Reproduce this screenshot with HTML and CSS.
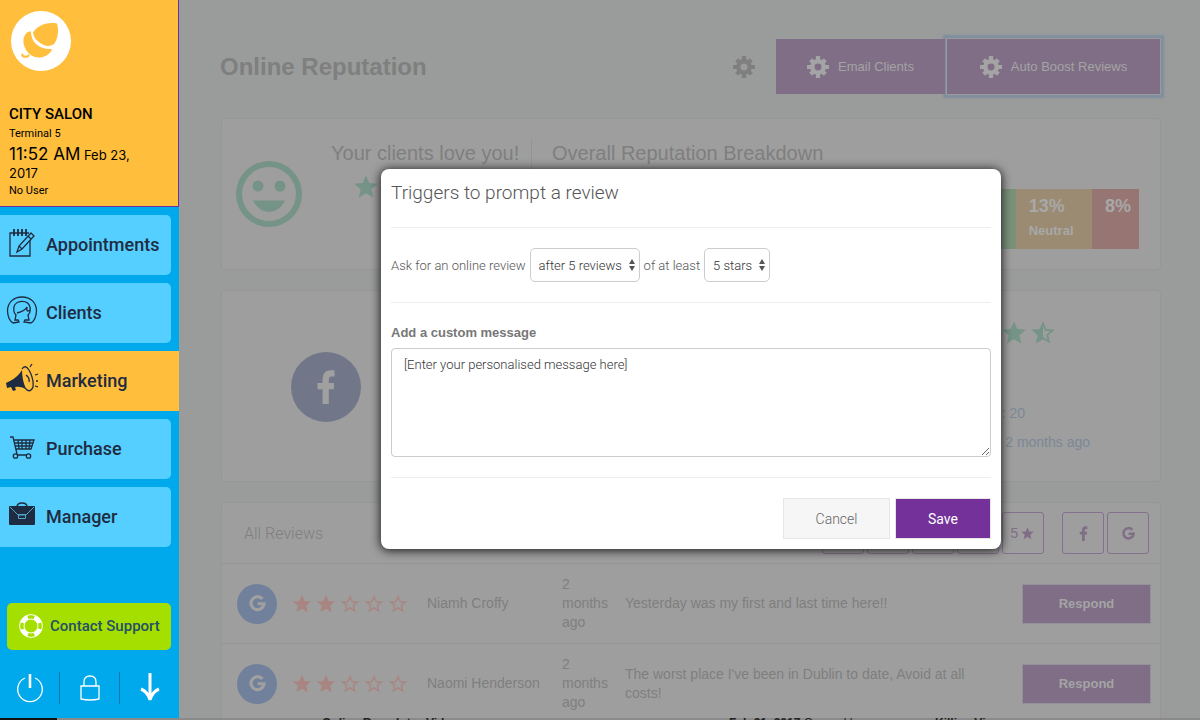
FILE: index.html
```html
<!DOCTYPE html>
<html lang="en">
<head>
    <meta charset="UTF-8">
    <meta name="viewport" content="width=device-width, initial-scale=1.0">
    <title>Online Reputation</title>
    <link rel="stylesheet" href="styles.css">
</head>
<body>

    <!-- Shared icons -->
    <svg class="sprite" aria-hidden="true">
        <symbol id="star" viewBox="0 0 24 24"><path fill="currentColor" d="M12 17.27 18.18 21l-1.64-7.03L22 9.24l-7.19-.61L12 2 9.19 8.63 2 9.24l5.46 4.73L5.82 21z"/></symbol>
        <symbol id="star-empty" viewBox="0 0 24 24"><path fill="currentColor" d="M22 9.24l-7.19-.62L12 2 9.19 8.63 2 9.24l5.46 4.73L5.82 21 12 17.27 18.18 21l-1.63-7.03L22 9.24zM12 15.4l-3.76 2.27 1-4.28-3.32-2.88 4.38-.38L12 6.1l1.71 4.04 4.38.38-3.32 2.88 1 4.28L12 15.4z"/></symbol>
        <symbol id="star-half" viewBox="0 0 24 24"><path fill="currentColor" d="M22 9.24l-7.19-.62L12 2 9.19 8.63 2 9.24l5.46 4.73L5.82 21 12 17.27 18.18 21l-1.63-7.03L22 9.24zM12 15.4V6.1l1.71 4.04 4.38.38-3.32 2.88 1 4.28L12 15.4z"/></symbol>
        <symbol id="gear" viewBox="0 0 24 24">
            <circle cx="12" cy="12" r="6.2" fill="none" stroke="currentColor" stroke-width="4.8"/>
            <path fill="none" stroke="currentColor" stroke-width="4.6" d="M12 0v6M12 18v6M0 12h6M18 12h6M4 4l3.6 3.6M16.4 16.4l3.6 3.6M4 20l3.6-3.6M16.4 7.6l3.6-3.6"/>
        </symbol>
        <symbol id="google" viewBox="0 0 24 24"><path fill="none" stroke="currentColor" stroke-width="4" d="M18.2 6.2A8.2 8.2 0 1 0 20.2 12.3H12.2"/></symbol>
        <symbol id="facebook" viewBox="0 0 24 24"><path fill="none" stroke="currentColor" stroke-width="4.4" d="M18 2.4h-2.4Q11.8 2.4 11.8 6.4V24M6 11.4h11.6"/></symbol>
    </svg>

    <div class="app">

        <!-- Sidebar -->
        <aside class="sidebar">
            <div class="salon">
                <svg class="logo" viewBox="0 0 60 60">
                    <circle cx="30" cy="30" r="30" fill="#fff"/>
                    <path fill="#ffbe3b" d="M22 21.5C28 13 37 11 46 12.5C48 20 47 27 43.5 32.5C40 36 34 35.5 30 32.5C25 29 22.5 26 22 21.5z"/>
                    <path fill="#ffbe3b" d="M20 20.5C14 20 11 28 13 34C15 42 22 47 29 46.5C35 46 40 42 41 38C34 38.5 29 36.500 25.500 33.500C21.500 30 20 25 20 20.500z"/>
                    <path fill="none" stroke="#ffbe3b" stroke-width="2.2" stroke-linecap="round" d="M11.500 43.500Q11 46 14 45.500Q17 46 17.500 44.500"/>
                </svg>
                <div class="salon-name">CITY SALON</div>
                <div class="small">Terminal 5</div>
                <div class="clock"><span class="time">11:52 AM</span> Feb 23, 2017</div>
                <div class="small">No User</div>
            </div>

            <nav class="menu">
                <a href="#">
                    <svg viewBox="0 0 32 32"><g fill="none" stroke="#1f2b41" stroke-width="1.3"><path d="M24 11v18H4V6h19"/><path d="M8 2v7M12 2v7M16 2v7M20 2v7" stroke-width="1.8"/><path fill="#54cfff" d="M11 25l2-6L25 6l3 3L16 22zM22 9l3 3M13 19l3 3"/></g></svg>
                    Appointments
                </a>
                <a href="#">
                    <svg viewBox="0 0 32 32"><g fill="none" stroke="#1f2b41" stroke-width="1.3"><path d="M7 28Q2 25 1.5 16C1.5 7 8 2 16 2S30.5 7 30.5 16Q30 25 25 28M7 28l6-1-1-2H9l1-5Q7 17 8 12C9 5 22 4 24 12Q25 17 22 20l1 5h-4l-1 2 7 1M11 18Q19 16 21 12Q20 18 24 15"/></g></svg>
                    Clients
                </a>
                <a href="#" class="active">
                    <svg viewBox="0 0 32 32"><path fill="#1f2b41" d="M0 20l4-2Q12 14 16 7Q16 17 20 26Q14 23 9 24l1 3-3 1-2-4-4 1z"/><g fill="none" stroke="#1f2b41" stroke-width="1.3"><path d="M16 6Q19 1 23 7Q28 16 27 24Q24 31 19 25M20 12q4 3 3 7M24 4l2-3M29 12l3-1M30 18h2M29 23l3 1"/></g></svg>
                    Marketing
                </a>
                <a href="#">
                    <svg viewBox="0 0 32 32"><g fill="none" stroke="#1f2b41" stroke-width="1.3"><path d="M4 6h3l4 17M8 9h20l-3 9H10M9 12h18M9 15h17M12 9l1 9M16 9v9M20 9v9M24 9l-1 9M11 24h10"/><circle cx="9.5" cy="25" r="2.2"/><circle cx="22.5" cy="25" r="2.2"/></g></svg>
                    Purchase
                </a>
                <a href="#">
                    <svg viewBox="0 0 32 32"><path fill="none" stroke="#1f2b41" stroke-width="1.6" d="M11 8q0-4 5-4t5 4"/><path fill="#1f2b41" d="M4 7h24q1 0 1 1v17q0 1-1 1H4q-1 0-1-1V8q0-1 1-1z"/><path fill="none" stroke="#54a5cc" d="M4 8l8 8h8l8-8M12.5 15.5h7v4h-7z"/></svg>
                    Manager
                </a>
            </nav>

            <div class="sidebar-bottom">
                <a href="#" class="support">
                    <svg viewBox="0 0 24 24"><g fill="none" stroke="#fff"><circle cx="12" cy="12" r="11.4"/><circle cx="12" cy="12" r="7"/><circle cx="12" cy="12" r="9.2" stroke-width="4.4" stroke-dasharray="8 6.45" stroke-dashoffset="-3"/></g></svg>
                    Contact Support
                </a>
                <div class="tools">
                    <button aria-label="Log out"><svg viewBox="0 0 30 30"><g fill="none" stroke="#fff"><path stroke-width="1.3" d="M10 5A12.3 12.3 0 1 0 20 5"/><path stroke-width="2.6" d="M15 1v14"/></g></svg></button>
                    <button aria-label="Lock"><svg viewBox="0 0 30 30"><path fill="none" stroke="#fff" stroke-width="1.3" d="M6 13h18v13q-9 2-18 0zM9 13V9q0-6 6-6t6 6v4"/></svg></button>
                    <button aria-label="Down"><svg viewBox="0 0 30 30"><path fill="none" stroke="#fff" stroke-width="3" d="M15 0v27M6 16q7 3 9 11q2-8 9-11"/></svg></button>
                </div>
            </div>
        </aside>

        <!-- Page behind the dialog -->
        <main class="main">
            <header class="page-header">
                <h1>Online Reputation</h1>
                <svg class="settings"><use href="#gear"/></svg>
                <button class="boost first"><svg><use href="#gear"/></svg>Email Clients</button>
                <button class="boost focused"><svg><use href="#gear"/></svg>Auto Boost Reviews</button>
            </header>

            <section class="card summary">
                <svg class="smiley" viewBox="0 0 66 66"><g fill="#759386"><path fill-rule="evenodd" d="M33 0a33 33 0 1 0 0 66a33 33 0 1 0 0-66zm0 6a27 27 0 1 1 0 54a27 27 0 1 1 0-54z"/><circle cx="22" cy="25" r="5.5"/><circle cx="44" cy="25" r="5.5"/><path d="M17 39.500h32Q43 51 33 51T17 39.500z"/></g></svg>
                <div class="score">
                    <h2>Your clients love you!</h2>
                    <div class="stars big">
                        <svg><use href="#star"/></svg><svg><use href="#star"/></svg><svg><use href="#star"/></svg><svg><use href="#star"/></svg><svg><use href="#star-half"/></svg>
                    </div>
                </div>
                <div class="breakdown">
                    <h2>Overall Reputation Breakdown</h2>
                    <div class="bar">
                        <div class="positive" style="width: 79%"></div>
                        <div class="neutral" style="width: 13%"><b>13%</b>Neutral</div>
                        <div class="negative" style="width: 8%"><b>8%</b></div>
                    </div>
                </div>
            </section>

            <section class="card source">
                <span class="fb-circle"><svg><use href="#facebook"/></svg></span>
                <div class="source-info">
                    <div class="stars big">
                        <svg><use href="#star"/></svg><svg><use href="#star"/></svg><svg><use href="#star"/></svg><svg><use href="#star"/></svg><svg><use href="#star-half"/></svg>
                    </div>
                    <p>Reviews : <span>20</span></p>
                    <p>Most recent review: <span>2 months ago</span></p>
                </div>
            </section>

            <section class="card reviews">
                <div class="reviews-header">
                    <h3>All Reviews</h3>
                    <div class="filters">
                        <button>1 <svg><use href="#star"/></svg></button>
                        <button>2 <svg><use href="#star"/></svg></button>
                        <button>3 <svg><use href="#star"/></svg></button>
                        <button>4 <svg><use href="#star"/></svg></button>
                        <button>5 <svg><use href="#star"/></svg></button>
                    </div>
                    <div class="filters">
                        <button aria-label="Facebook"><svg><use href="#facebook"/></svg></button>
                        <button aria-label="Google"><svg><use href="#google"/></svg></button>
                    </div>
                </div>
                <table>
                    <tr>
                        <td class="col-icon"><span class="g-circle"><svg><use href="#google"/></svg></span></td>
                        <td class="col-stars"><div class="stars"><svg><use href="#star"/></svg><svg><use href="#star"/></svg><svg><use href="#star-empty"/></svg><svg><use href="#star-empty"/></svg><svg><use href="#star-empty"/></svg></div></td>
                        <td class="col-name">Niamh Croffy</td>
                        <td class="col-date">2 months ago</td>
                        <td class="col-text">Yesterday was my first and last time here!!</td>
                        <td class="col-action"><button class="respond">Respond</button></td>
                    </tr>
                    <tr>
                        <td><span class="g-circle"><svg><use href="#google"/></svg></span></td>
                        <td><div class="stars"><svg><use href="#star"/></svg><svg><use href="#star"/></svg><svg><use href="#star-empty"/></svg><svg><use href="#star-empty"/></svg><svg><use href="#star-empty"/></svg></div></td>
                        <td>Naomi Henderson</td>
                        <td class="col-date">2 months ago</td>
                        <td class="col-text">The worst place I've been in Dublin to date, Avoid at all costs!</td>
                        <td><button class="respond">Respond</button></td>
                    </tr>
                </table>
            </section>
        </main>

        <!-- Dialog -->
        <div class="modal-wrap">
            <form class="modal" role="dialog" aria-labelledby="modalTitle">
                <h2 id="modalTitle">Triggers to prompt a review</h2>
                <div class="trigger">
                    <label for="count">Ask for an online review</label>
                    <span class="select"><select id="count"><option>after 5 reviews</option></select></span>
                    <label for="rating">of at least</label>
                    <span class="select"><select id="rating"><option>5 stars</option></select></span>
                </div>
                <div class="message">
                    <label for="message">Add a custom message</label>
                    <textarea id="message">[Enter your personalised message here]</textarea>
                </div>
                <div class="actions">
                    <button type="button" class="cancel">Cancel</button>
                    <button type="button" class="save">Save</button>
                </div>
            </form>
        </div>
    </div>

    <!-- Top edge of the window below -->
    <div class="below">
        <span class="dark"></span>
        <span class="subject">Online Rep - Intro Video</span>
        <span class="opened"><b>Feb 21, 2017</b> Opened by me</span>
        <b>Killian Vigna</b>
    </div>

</body>
</html>
```
FILE: styles.css
```css
* {
    box-sizing: border-box;
}

body {
    margin: 0;
    height: 100vh;
    display: flex;
    flex-direction: column;
    overflow: hidden;
    background: #999c9a;
    font-family: "Liberation Sans", Arial, sans-serif;
    font-size: 14px;
    color: #7f7f7f;
}

h1, h2, h3, p {
    margin: 0;
}

button, select, textarea {
    font: inherit;
}

a {
    text-decoration: none;
}

.sprite {
    display: none;
}

.app {
    flex: 1;
    min-height: 0;
    display: flex;
    position: relative;
    overflow: hidden;
}

/* Sidebar */
.sidebar {
    width: 179px;
    flex-shrink: 0;
    display: flex;
    flex-direction: column;
    background: #00a8ec;
    font-family: Roboto, sans-serif;
}

.salon {
    height: 207px;
    padding: 11px 9px 0;
    background: #ffbe3b;
    border-right: 1px solid #7030a0;
    border-bottom: 1px solid #7030a0;
    color: #000;
}

.logo {
    display: block;
    width: 60px;
    height: 60px;
    margin: 0 0 32px 2px;
}

.salon-name {
    font-size: 15px;
    font-weight: 500;
    line-height: 22px;
}

.small {
    font-size: 11px;
    line-height: 18px;
}

.clock {
    font-family: Inter, sans-serif;
    font-size: 13px;
    line-height: 18px;
    padding: 2px 16px 0 0;
}

.time {
    font-size: 17px;
}

.menu {
    display: flex;
    flex-direction: column;
    gap: 8px;
    padding-top: 8px;
}

.menu a {
    display: flex;
    align-items: center;
    gap: 8px;
    height: 60px;
    margin-right: 8px;
    padding: 0 0 2px 6px;
    background: #54cfff;
    border-radius: 0 5px 5px 0;
    color: #1f2b41;
    font-size: 18px;
    font-weight: 500;
}

.menu a.active {
    margin-right: 0;
    background: #ffbe3b;
    border-radius: 0;
}

.menu svg {
    width: 32px;
    height: 32px;
    margin-bottom: 2px;
}

.sidebar-bottom {
    margin-top: auto;
    padding: 0 0 14px;
}

.support {
    display: flex;
    align-items: center;
    gap: 7px;
    height: 47px;
    margin: 0 8px 0 7px;
    padding: 0 0 1px 12px;
    background: #a4df00;
    border-radius: 5px;
    color: #24506a;
    font-size: 15px;
    font-weight: 500;
}

.support svg {
    width: 24px;
    height: 24px;
}

.tools {
    display: flex;
    margin-top: 22px;
}

.tools button {
    flex: 1;
    height: 32px;
    padding: 0;
    background: none;
    border: none;
    border-left: 1px solid #0779aa;
}

.tools button:first-child {
    border-left: none;
}

.tools svg {
    display: block;
    width: 30px;
    height: 30px;
    margin: auto;
}

/* Main page */
.main {
    flex: 1;
    min-width: 0;
    padding: 39px 39px 0 42px;
}

.page-header {
    display: flex;
    align-items: center;
    gap: 2px;
    margin: 0 1px 24px -1px;
}

.page-header h1 {
    flex: 1;
    font-size: 24px;
}

.page-header svg {
    width: 22px;
    height: 22px;
}

.page-header .settings {
    margin-right: 19px;
}

.boost {
    display: flex;
    align-items: center;
    justify-content: center;
    gap: 9px;
    width: 213px;
    height: 55px;
    padding: 0;
    background: #806e86;
    border: none;
    color: #a4a4a4;
    font-size: 13px;
}

.boost.first {
    position: relative;
    z-index: 1;
    width: 169px;
}

.boost.focused {
    box-shadow: 0 0 0 1px #999c9a, 0 0 2px 4px #808ea0;
}

.card {
    background: #9e9e9e;
    border: 1px solid #969696;
    border-radius: 4px;
    margin-bottom: 20px;
}

.card h2 {
    font-size: 20px;
    font-weight: normal;
    line-height: 24px;
}

.summary {
    display: flex;
    height: 152px;
    padding: 20px 21px 20px 14px;
}

.smiley {
    width: 66px;
    height: 66px;
    margin-top: 22px;
}

.score {
    width: 230px;
    padding: 2px 0 0 29px;
    border-right: 1px solid #949494;
}

.breakdown {
    flex: 1;
    padding: 2px 0 0 20px;
}

.stars {
    display: flex;
    gap: 2px;
    margin-left: -1px;
    color: #a98582;
}

.stars svg {
    width: 22px;
    height: 22px;
}

.stars.big {
    justify-content: center;
    gap: 1px;
    color: #759386;
}

.stars.big svg {
    width: 28px;
    height: 28px;
}

.score .stars {
    margin: 8px 15px 0 0;
}

.bar {
    display: flex;
    height: 60px;
    margin-top: 24px;
    color: #a8a8a8;
    font-size: 13px;
    font-weight: bold;
    line-height: 16px;
}

.bar b {
    display: block;
    font-size: 18px;
    line-height: 34px;
}

.positive {
    background: #789179;
}

.neutral {
    padding-left: 13px;
    background: #9a8b72;
}

.negative {
    padding-left: 13px;
    background: #977573;
}

.source {
    display: flex;
    justify-content: space-between;
    height: 192px;
    padding: 28px 60px 0 69px;
}

.fb-circle,
.g-circle {
    display: flex;
    align-items: center;
    justify-content: center;
    border-radius: 50%;
    color: #a0a0a0;
}

.fb-circle {
    width: 70px;
    height: 70px;
    margin-top: 33px;
    background: #717789;
}

.fb-circle svg {
    width: 34px;
    height: 34px;
}

.source-info {
    width: 230px;
    text-align: center;
}

.source-info .stars {
    margin-bottom: 52px;
}

.source-info p {
    line-height: 29px;
}

.source-info p span {
    color: #7c8896;
}

.reviews-header {
    display: flex;
    align-items: center;
    gap: 18px;
    height: 60px;
    padding: 0 11px 0 22px;
}

.reviews-header h3 {
    flex: 1;
    font-family: Roboto, sans-serif;
    font-size: 16px;
    font-weight: 300;
}

.filters {
    display: flex;
    gap: 3px;
}

.filters button {
    display: flex;
    align-items: center;
    justify-content: center;
    gap: 2px;
    width: 42px;
    height: 42px;
    padding: 0;
    background: none;
    border: 1px solid #86708f;
    border-radius: 3px;
    color: #806e86;
}

.filters svg {
    width: 15px;
    height: 15px;
}

table {
    width: 100%;
    table-layout: fixed;
    border-collapse: collapse;
    line-height: 19px;
}

td {
    height: 80px;
    padding: 0;
    border-top: 1px solid #949494;
}

.col-icon {
    width: 70px;
}

.col-stars,
.col-name {
    width: 135px;
}

td.col-date {
    width: 63px;
    padding-right: 12px;
}

td.col-text {
    padding-right: 30px;
}

.col-action {
    width: 138px;
}

.g-circle {
    width: 40px;
    height: 40px;
    margin-left: 15px;
    background: #71809b;
}

.g-circle svg {
    width: 19px;
    height: 19px;
}

.respond {
    width: 129px;
    height: 40px;
    background: #806e86;
    border: 1px solid #94909a;
    color: #a4a4a4;
    font-size: 13px;
    font-weight: bold;
}

/* Dialog */
.modal-wrap {
    position: absolute;
    top: 0;
    right: 39px;
    bottom: 0;
    left: 221px;
    display: flex;
    align-items: center;
    justify-content: center;
}

.modal {
    width: 620px;
    padding: 0 10px 10px;
    background: #fff;
    border-radius: 8px;
    box-shadow: 0 1px 10px 1px #222;
    font-family: Roboto, "Liberation Sans", sans-serif;
    font-size: 13px;
    font-weight: 300;
    color: #555;
}

.modal h2 {
    font-size: 19px;
    font-weight: 300;
    line-height: 48px;
    padding-bottom: 10px;
}

.trigger {
    display: flex;
    align-items: center;
    gap: 4px;
    padding: 20px 0;
    border: solid #eee;
    border-width: 1px 0;
}

.select {
    position: relative;
}

.select select {
    display: block;
    height: 34px;
    padding: 0 16px 0 8px;
    appearance: none;
    background: #fff;
    border: 1px solid #ccc;
    border-radius: 5px;
    color: #333;
}

/* Up and down arrows */
.select::before,
.select::after {
    content: "";
    position: absolute;
    right: 5px;
    border: solid transparent;
    border-width: 0 3px;
}

.select::before {
    top: 11px;
    border-bottom: 5px solid #555;
}

.select::after {
    bottom: 11px;
    border-top: 5px solid #555;
}

.message {
    padding: 20px 0;
    border-bottom: 1px solid #eee;
}

.message label {
    display: block;
    font-family: "Liberation Sans", Arial, sans-serif;
    font-weight: bold;
    line-height: 20px;
    margin-bottom: 5px;
    color: #777;
}

textarea {
    display: block;
    width: 100%;
    height: 109px;
    padding: 6px 12px;
    border: 1px solid #ccc;
    border-radius: 4px;
    line-height: 20px;
    color: #333;
    resize: vertical;
}

.actions {
    display: flex;
    justify-content: flex-end;
    gap: 5px;
    padding-top: 20px;
}

.actions button {
    height: 41px;
    border: 1px solid #e6e6e6;
    font-size: 14px;
    font-weight: 400;
}

.actions .cancel {
    width: 107px;
    background: #f6f6f6;
    color: #666;
    font-weight: 300;
}

.save {
    width: 96px;
    background: #743199;
    color: #fff;
}

/* Window below */
.below {
    display: flex;
    height: 2px;
    overflow: hidden;
    background: #8a8a8a;
    font-size: 12px;
    line-height: 10px;
    color: #222;
}

.dark {
    width: 57px;
    background: #111;
}

.subject {
    width: 672px;
    padding-left: 265px;
    font-weight: bold;
}

.opened {
    width: 206px;
}
```
